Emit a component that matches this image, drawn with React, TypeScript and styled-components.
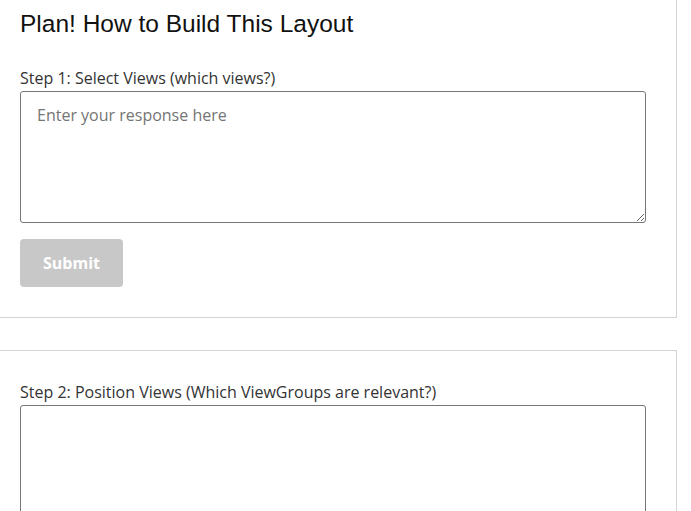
import React from "react";
import styled, { createGlobalStyle } from "styled-components";

const Global = createGlobalStyle`
  html, body { margin: 0; padding: 0; background: #ffffff; }
  body { font-family: "Open Sans", sans-serif; color: #333333; }
`;

const Page = styled.div`
  width: 677px;
  display: flex;
  flex-direction: column;
  gap: 32px;
`;

const Card = styled.section<{ $first?: boolean }>`
  background: #ffffff;
  border: 1px solid #d4d4d4;
  border-left: none;
  border-top: ${(p) => (p.$first ? "none" : "1px solid #d4d4d4")};
  padding: ${(p) => (p.$first ? "8px" : "30px")} 30px 30px 20px;
  display: flex;
  flex-direction: column;
`;

const Title = styled.h2`
  margin: 0 0 27px;
  font-family: "Liberation Sans", Arial, sans-serif;
  font-weight: 400;
  font-size: 24.5px;
  line-height: 32px;
  color: #111111;
`;

const Label = styled.label`
  font-family: "Open Sans", sans-serif;
  font-size: 16px;
  line-height: 22px;
  color: #333333;
  margin-bottom: 2px;
`;

const Area = styled.textarea`
  box-sizing: border-box;
  width: 626px;
  height: 132px;
  border: 1px solid #767676;
  border-radius: 3px;
  padding: 12px 16px;
  font-family: "Open Sans", sans-serif;
  font-size: 16px;
  line-height: 22px;
  color: #333333;
  background: #ffffff;
  &::placeholder { color: #757575; }
`;

const Button = styled.button`
  margin-top: 16px;
  width: 103px;
  height: 48px;
  border: none;
  border-radius: 4px;
  background: #c8c8c8;
  color: #ffffff;
  font-family: "Open Sans", sans-serif;
  font-weight: 700;
  font-size: 16px;
  cursor: not-allowed;
`;

export default function App() {
  return (
    <>
      <Global />
      <Page>
        <Card $first>
          <Title>Plan! How to Build This Layout</Title>
          <Label>Step 1: Select Views (which views?)</Label>
          <Area placeholder="Enter your response here" />
          <div>
            <Button disabled>Submit</Button>
          </div>
        </Card>
        <Card>
          <Label>Step 2: Position Views (Which ViewGroups are relevant?)</Label>
          <Area />
        </Card>
      </Page>
    </>
  );
}
